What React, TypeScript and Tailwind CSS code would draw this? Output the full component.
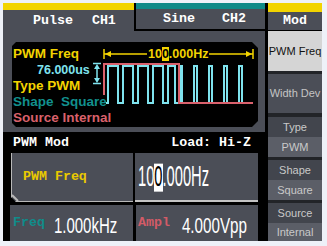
import type {FC} from "react";

const mono = "font-['Liberation_Mono',monospace] font-bold";
const sans = "font-['Liberation_Sans',Arial,sans-serif]";

const SideOption: FC<{label: string; value: string; bottom?: string}> = ({label, value, bottom = "h-[20px]"}) => (
    <div className="flex flex-col">
        <div className="h-[20px] bg-[#42454d] flex items-center justify-center text-[#c9c9c9]">{label}</div>
        <div className={`${bottom} bg-[#5b5e67] flex items-center justify-center text-[#c9c9c9]`}>{value}</div>
    </div>
);

const Waveform: FC = () => (
    <svg className="absolute inset-0" width={246} height={85} viewBox="0 0 246 85">
        <g stroke="#f3d300" strokeWidth={1.5} fill="none">
            <line x1={92} y1={12} x2={241} y2={12}/>
            <line x1={92} y1={7} x2={92} y2={17}/>
            <line x1={241} y1={7} x2={241} y2={17}/>
        </g>
        <polygon points="93,12 99,9 99,15" fill="#f3d300"/>
        <polygon points="240,12 234,9 234,15" fill="#f3d300"/>
        <g stroke="#7fe3ee" strokeWidth={1.5} fill="none">
            <line x1={81} y1={21.5} x2={89} y2={21.5}/>
            <line x1={85} y1={26} x2={85} y2={37}/>
            <line x1={81} y1={41.5} x2={89} y2={41.5}/>
        </g>
        <polygon points="85,22 82,27 88,27" fill="#7fe3ee"/>
        <polygon points="85,41 82,36 88,36" fill="#7fe3ee"/>
        <path
            d="M94,61 H96 V24 H106 V61 H111 V24 H121 V61 H126 V24 H136 V61 H141 V24 H151 V61 H156 V24 H163 V61 H168 V24 H170 V61 H182 V24 H185 V61 H197 V24 H200 V61 H212 V24 H215 V61 H227 V24 H230 V61 H241"
            stroke="#7fe3ee" strokeWidth={2} fill="none"/>
        <polyline points="92,53 92,22 167,22 167,61 241,61" stroke="#d9616c" strokeWidth={2} fill="none"/>
    </svg>
);

export default function App() {
    return <div className="w-[327px] h-[246px] bg-[#eef1f8] pt-[3px] pl-[3px] overflow-hidden">
        <div className="flex w-[319px] h-[238px]">
            {/* main area */}
            <div className="flex flex-col w-[262px]">
                <div className="flex h-[28px]">
                    <div className="flex flex-col w-[131px]">
                        <div className="h-[7px] bg-[#f2d400]"/>
                        <div className={`flex-1 bg-[#4b4e57] flex items-center pl-[30px] gap-[19px] text-white text-[13.3px] ${mono}`}>
                            <span>Pulse</span><span>CH1</span>
                        </div>
                    </div>
                    <div className="flex flex-col w-[131px] border-l-2 border-b-2 border-black">
                        <div className="h-[9px] bg-[#0f8a88]"/>
                        <div className={`flex-1 bg-[#4b4e57] flex items-center pl-[27px] gap-[27px] text-white text-[13.3px] ${mono}`}>
                            <span>Sine</span><span>CH2</span>
                        </div>
                    </div>
                </div>

                <div className="bg-[#4b4e57] pt-[11px] pl-[9px] pr-[7px] pb-[5px]">
                    <div className={`relative w-[246px] h-[85px] bg-black pt-[4px] pl-[1px] text-[13.5px] leading-[16px] font-bold ${sans} [clip-path:polygon(4px_0,240px_0,246px_6px,246px_79px,240px_85px,4px_85px,0_81px,0_4px)]`}>
                        <div className="text-[#f3d300]">PWM Freq</div>
                        <div className="text-[#7fe3ee] pl-[24px] text-[12.5px]">76.000us</div>
                        <div className="text-[#f3d300]">Type PWM</div>
                        <div className="text-[#12908e] whitespace-pre">Shape  Square</div>
                        <div className="text-[#d9606b]">Source Internal</div>
                        <Waveform/>
                        <div className="absolute left-[135px] top-[4px] h-[16px] bg-black px-[1px] text-[12.5px] text-[#f3d300]">
                            10<span className="bg-[#f3d300] text-black">0</span>.000Hz
                        </div>
                    </div>
                </div>

                <div className="flex flex-col h-[109px] bg-black">
                    <div className={`h-[21px] flex items-center justify-between pl-[10px] pr-[14px] text-white text-[13.3px] ${mono}`}>
                        <span>PWM Mod</span><span>Load: Hi-Z</span>
                    </div>
                    <div className="flex h-[49px]">
                        <div className="w-[8px]"/>
                        <div className={`relative w-[122px] bg-[#4b4e57] border-l border-b border-[#b8b8b8] flex items-center pl-[11px] text-[#e9c900] text-[13.3px] ${mono} [clip-path:polygon(0_0,100%_0,100%_100%,5px_100%,0_44px)]`}>
                            PWM Freq
                            <svg className="absolute left-0 bottom-0" width={7} height={7}>
                                <line x1={0} y1={1} x2={6} y2={7} stroke="#b8b8b8" strokeWidth={2}/>
                            </svg>
                        </div>
                        <div className="w-[2px]"/>
                        <div className={`w-[123px] bg-[#4b4e57] border-b-2 border-[#c4c4c4] flex items-center pl-[3px] text-white ${sans}`}>
                            <span className="inline-block [transform:scaleY(2)] text-[14.7px] leading-none">
                                10<span className="inline-block h-[13.5px] leading-[13.5px] bg-white text-black">0</span>.000Hz
                            </span>
                        </div>
                    </div>
                    <div className="flex h-[36px] mt-[3px] pl-[7px] gap-[3px]">
                        <div className="w-[123px] bg-[#4b4e57] flex items-center pl-[3px] gap-[9px]">
                            <span className={`text-[#0f8c8a] text-[13.3px] ${mono}`}>Freq</span>
                            <span className={`inline-block [transform:scaleY(1.5)] mt-[3px] text-[15px] leading-none text-white ${sans}`}>1.000kHz</span>
                        </div>
                        <div className="w-[122px] bg-[#4b4e57] flex items-center pl-[2px] gap-[12px]">
                            <span className={`text-[#d35b67] text-[13.3px] ${mono}`}>Ampl</span>
                            <span className={`inline-block [transform:scaleY(1.5)] mt-[3px] text-[15.2px] leading-none text-white ${sans}`}>4.000Vpp</span>
                        </div>
                    </div>
                </div>
            </div>

            <div className="w-[3px] bg-black"/>

            {/* soft key column */}
            <div className={`flex flex-col w-[54px] text-[11px] ${sans}`}>
                <div className="h-[9px] bg-[#f2d400]"/>
                <div className={`h-[18px] bg-[#4b4e57] flex items-center justify-center text-white text-[13.3px] ${mono}`}>Mod</div>
                <div className="h-[1px] bg-black"/>
                <div className="h-[40px] bg-[#d5d5d5] flex items-center justify-center text-[#111]">PWM Freq</div>
                <div className="h-[3px] bg-[#222428]"/>
                <div className="h-[39px] bg-[#4b4e57] flex items-center justify-center text-[#c4c4c4]">Width Dev</div>
                <div className="h-[4px] bg-[#222428]"/>
                <SideOption label="Type" value="PWM"/>
                <div className="h-[3px] bg-[#222428]"/>
                <SideOption label="Shape" value="Square"/>
                <div className="h-[3px] bg-[#222428]"/>
                <SideOption label="Source" value="Internal" bottom="h-[18px]"/>
            </div>
        </div>
    </div>;
}
